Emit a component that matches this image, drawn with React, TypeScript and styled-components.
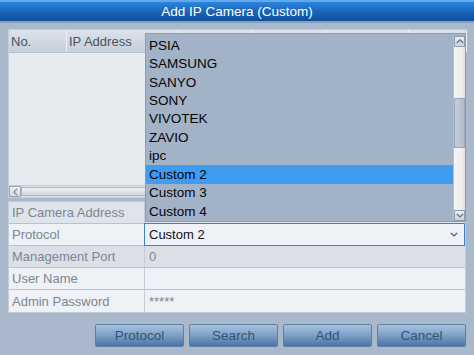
import React from "react";
import styled, { createGlobalStyle } from "styled-components";

const Global = createGlobalStyle`
  html, body { margin: 0; padding: 0; background: #aab9cc; }
  body { font-family: "Liberation Sans", Arial, sans-serif; }
  * { box-sizing: border-box; }
`;

const Window = styled.div`
  position: relative;
  width: 474px;
  height: 355px;
  background: #a9b8cb;
  display: flex;
  flex-direction: column;
  overflow: hidden;
  font-size: 13px;
`;

const TitleBar = styled.div`
  height: 23px;
  flex: none;
  border-top: 2px solid #62a8ec;
  background: linear-gradient(#2c86dc, #1862b8 55%, #0e4f9c);
  color: #fff;
  font-size: 13.5px;
  display: flex;
  align-items: center;
  justify-content: center;
  border-bottom: 2px solid #8d9fb5;
`;

const Content = styled.div`
  flex: 1;
  display: flex;
  flex-direction: column;
  padding: 6px 8px 0 8px;
`;

const TablePanel = styled.div`
  height: 169px;
  background: #e7ebf0;
  border: 1px solid #c5cdd8;
  display: flex;
  flex-direction: column;
`;

const HeaderRow = styled.div`
  height: 23px;
  display: flex;
  background: linear-gradient(#dde2e9, #c7cfd9);
  border-bottom: 1px solid #b4bfcc;
  flex: none;
`;

const HeaderCell = styled.div<{ $w: number }>`
  width: ${(p) => p.$w}px;
  flex: none;
  border-right: 1px solid #eef1f5;
  color: #4a5260;
  padding-left: 2px;
  display: flex;
  align-items: center;
  font-size: 13px;
`;

const TableBody = styled.div`
  flex: 1;
`;

const HScroll = styled.div`
  height: 12px;
  display: flex;
  background: #dfe4ea;
  border-top: 1px solid #c2cad5;
`;

const ArrowBox = styled.div`
  width: 12px;
  height: 11px;
  flex: none;
  border: 1px solid #9aa8b8;
  background: linear-gradient(#eef1f5, #d4dae2);
  display: flex;
  align-items: center;
  justify-content: center;
`;

const HThumb = styled.div`
  flex: 1;
  margin: 1px 0;
  border: 1px solid #a6b2c0;
  background: linear-gradient(#eef1f4, #d0d6de);
`;

const Form = styled.div`
  margin-top: 3px;
  display: flex;
  flex-direction: column;
  border: 1px solid #c3ccd7;
  background: #eef1f5;
`;

const FormRow = styled.div<{ $bg: string }>`
  height: 22px;
  display: flex;
  background: ${(p) => p.$bg};
  border-bottom: 1px solid #b9c3cf;
  &:last-child { border-bottom: none; }
`;

const Label = styled.div`
  width: 136px;
  flex: none;
  color: #7c8694;
  padding-left: 3px;
  display: flex;
  align-items: center;
  border-right: 1px solid #c3ccd7;
`;

const Value = styled.div`
  flex: 1;
  color: #7c8694;
  padding-left: 4px;
  display: flex;
  align-items: center;
`;

const Select = styled.div`
  flex: 1;
  margin: -1px 0 -1px -1px;
  border: 1.5px solid #3d82d2;
  background: #eef2f7;
  color: #111;
  padding: 0 6px 0 4px;
  display: flex;
  align-items: center;
  justify-content: space-between;
`;

const ButtonBar = styled.div`
  margin-top: 11px;
  display: flex;
  justify-content: flex-end;
  gap: 5px;
`;

const Button = styled.div`
  width: 89px;
  height: 23px;
  border: 1px solid #5d80aa;
  border-radius: 2px;
  background: linear-gradient(#a8c2de, #7d9fc6 50%, #4a74a6);
  color: #34527a;
  font-size: 13.5px;
  display: flex;
  align-items: center;
  justify-content: center;
`;

const Dropdown = styled.div`
  position: absolute;
  left: 145px;
  top: 33px;
  width: 321px;
  height: 189px;
  background: #a2b2c7;
  border: 1px solid #8c9cb2;
  display: flex;
`;

const List = styled.div`
  flex: 1;
  padding-top: 2px;
  display: flex;
  flex-direction: column;
`;

const Item = styled.div<{ $active?: boolean }>`
  height: 18.45px;
  flex: none;
  padding-left: 3px;
  display: flex;
  align-items: center;
  color: #050505;
  font-size: 13.5px;
  background: ${(p) => (p.$active ? "#3f9cf0" : "transparent")};
`;

const VScroll = styled.div`
  width: 12px;
  flex: none;
  margin-top: 2px;
  display: flex;
  flex-direction: column;
  background: linear-gradient(90deg, #f3f4f7, #f0eeee 70%, #e8dcd8);
  border-left: 1px solid #b6c0cc;
`;

const VArrow = styled.div`
  height: 11px;
  flex: none;
  border: 1px solid #8f9db0;
  background: linear-gradient(#e9edf2, #c9d1db);
  display: flex;
  align-items: center;
  justify-content: center;
`;

const VTrack = styled.div`
  flex: 1;
  display: flex;
  flex-direction: column;
`;

const VThumb = styled.div`
  margin-top: 51px;
  height: 50px;
  border: 1px solid #9aa8ba;
  background: linear-gradient(90deg, #c5ceda, #b2bdcb);
`;

const Chevron = ({ up, size = 8, color = "#5b6b80" }: { up?: boolean; size?: number; color?: string }) => (
  <svg width={size} height={size * 0.6} viewBox="0 0 10 6">
    <path d={up ? "M1 5 L5 1 L9 5" : "M1 1 L5 5 L9 1"} fill="none" stroke={color} strokeWidth="1.5" />
  </svg>
);

const LeftArrow = () => (
  <svg width="5" height="8" viewBox="0 0 6 10">
    <path d="M5 1 L1 5 L5 9" fill="none" stroke="#6b7a8e" strokeWidth="1.3" />
  </svg>
);

const items = ["PSIA", "SAMSUNG", "SANYO", "SONY", "VIVOTEK", "ZAVIO", "ipc", "Custom 2", "Custom 3", "Custom 4"];
const cols = [58, 111, 75, 74, 82, 58];

export default function App() {
  return (
    <>
      <Global />
      <Window>
        <TitleBar>Add IP Camera (Custom)</TitleBar>
        <Content>
          <TablePanel>
            <HeaderRow>
              {cols.map((w, i) => (
                <HeaderCell key={i} $w={w}>
                  {i === 0 ? "No." : i === 1 ? "IP Address" : ""}
                </HeaderCell>
              ))}
            </HeaderRow>
            <TableBody />
            <HScroll>
              <ArrowBox>
                <LeftArrow />
              </ArrowBox>
              <HThumb />
            </HScroll>
          </TablePanel>
          <Form>
            <FormRow $bg="#dfe4ea">
              <Label>IP Camera Address</Label>
              <Value />
            </FormRow>
            <FormRow $bg="#eef1f5">
              <Label>Protocol</Label>
              <Select>
                Custom 2
                <Chevron size={8} color="#4a5668" />
              </Select>
            </FormRow>
            <FormRow $bg="#dcdfe5">
              <Label>Management Port</Label>
              <Value>0</Value>
            </FormRow>
            <FormRow $bg="#eef1f5">
              <Label>User Name</Label>
              <Value />
            </FormRow>
            <FormRow $bg="#eef1f5">
              <Label>Admin Password</Label>
              <Value>*****</Value>
            </FormRow>
          </Form>
          <ButtonBar>
            <Button>Protocol</Button>
            <Button>Search</Button>
            <Button>Add</Button>
            <Button>Cancel</Button>
          </ButtonBar>
        </Content>
        <Dropdown>
          <List>
            {items.map((it) => (
              <Item key={it} $active={it === "Custom 2"}>
                {it}
              </Item>
            ))}
          </List>
          <VScroll>
            <VArrow>
              <Chevron up size={8} />
            </VArrow>
            <VTrack>
              <VThumb />
            </VTrack>
            <VArrow>
              <Chevron size={8} />
            </VArrow>
          </VScroll>
        </Dropdown>
      </Window>
    </>
  );
}
